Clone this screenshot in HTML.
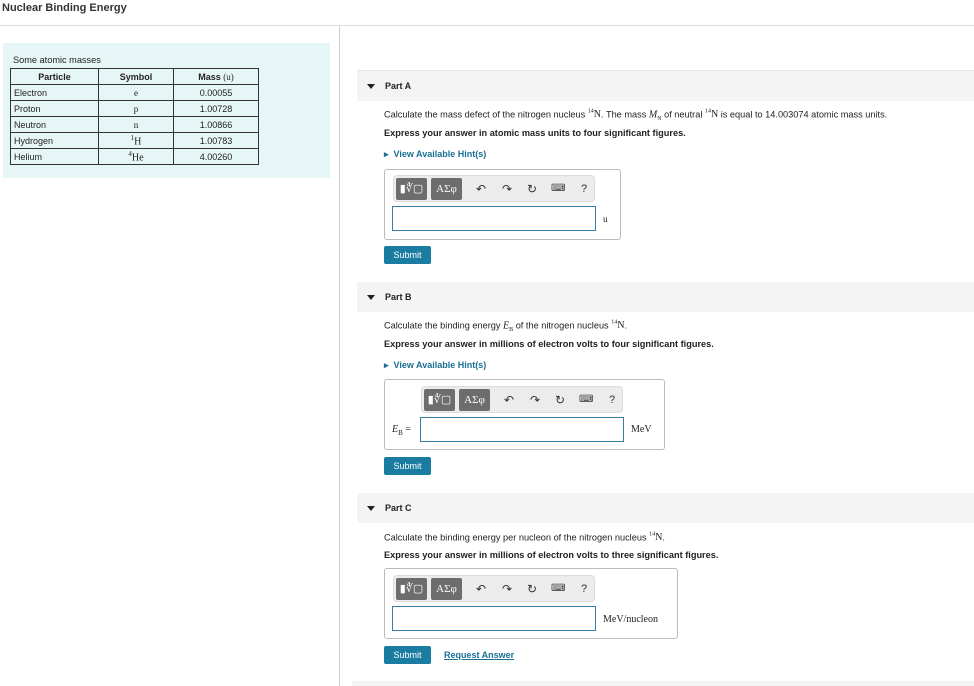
<!DOCTYPE html>
<html><head><meta charset="utf-8"><style>
*{margin:0;padding:0;box-sizing:border-box}
body{width:974px;height:686px;position:relative;background:#fff;font-family:"Liberation Sans",Arial,sans-serif;color:#222;overflow:hidden}
.a{position:absolute}
.t{font-size:9.2px;white-space:nowrap}
.ser{font-family:"Liberation Serif",serif}
table{border-collapse:collapse;font-size:9px}
td,th{border:1px solid #333;height:16px;padding:0 3px}
th{font-weight:bold;text-align:center}
.ph{background:#f4f4f4;left:357px;width:617px;height:30px}
.ph span{position:absolute;left:28px;top:10px;font-size:9px;font-weight:bold}
.ph i{position:absolute;left:10px;top:13px;border-left:4px solid transparent;border-right:4px solid transparent;border-top:5px solid #222}
.box{border:1px solid #bbb;border-radius:3px;background:#fff}
.tb{background:#ececec;border:1px solid #ddd;border-radius:4px;height:27px;width:202px}
.btn{position:absolute;top:2px;height:22px;width:31px;background:#6d6d6d;border-radius:2px;color:#fff;font-family:"Liberation Serif",serif;font-size:11px;text-align:center;line-height:22px}
.ic{position:absolute;top:6px;font-size:12px;color:#333;line-height:14px}
.inp{border:1px solid #3a7ca5;height:25px;width:204px;background:#fff}
.sub{background:#1a7ca0;color:#fff;font-size:9px;width:47px;height:18px;text-align:center;line-height:18px;border-radius:2px}
.hint{color:#1a6f94;font-weight:bold;font-size:9px}
</style></head><body>
<div class="a" style="left:2px;top:2px;font-size:11px;font-weight:bold;color:#333">Nuclear Binding Energy</div>
<div class="a" style="left:0;top:25px;width:974px;height:1px;background:#ddd"></div>
<div class="a" style="left:339px;top:26px;width:1px;height:660px;background:#ccc"></div>
<div class="a" style="left:3px;top:43px;width:327px;height:135px;background:#e6f5f5"></div>
<div class="a t" style="left:13px;top:55px">Some atomic masses</div>
<table class="a" style="left:10px;top:68px;width:249px">
<tr><th style="width:88px">Particle</th><th style="width:75px">Symbol</th><th>Mass <span class="ser" style="font-weight:normal">(u)</span></th></tr>
<tr><td>Electron</td><td class="ser" style="text-align:center">e</td><td style="text-align:center">0.00055</td></tr>
<tr><td>Proton</td><td class="ser" style="text-align:center">p</td><td style="text-align:center">1.00728</td></tr>
<tr><td>Neutron</td><td class="ser" style="text-align:center">n</td><td style="text-align:center">1.00866</td></tr>
<tr><td>Hydrogen</td><td class="ser" style="text-align:center;font-size:10px"><sup style="font-size:7px">1</sup>H</td><td style="text-align:center">1.00783</td></tr>
<tr><td>Helium</td><td class="ser" style="text-align:center;font-size:10px"><sup style="font-size:7px">4</sup>He</td><td style="text-align:center">4.00260</td></tr>
</table>

<div class="a" style="left:357px;top:70px;width:617px;height:1px;background:#e6e6e6"></div>
<div class="a ph" style="top:71px"><i></i><span>Part A</span></div>
<div class="a t" style="left:384px;top:109px">Calculate the mass defect of the nitrogen nucleus <span class="ser" style="font-size:10px"><sup style="font-size:6px">14</sup>N</span>. The mass <i class="ser" style="font-size:10px">M</i><sub class="ser" style="font-size:6px">N</sub> of neutral <span class="ser" style="font-size:10px"><sup style="font-size:6px">14</sup>N</span> is equal to 14.003074 atomic mass units.</div>
<div class="a t" style="left:384px;top:128px;font-weight:bold">Express your answer in atomic mass units to four significant figures.</div>
<div class="a hint" style="left:384px;top:149px">▸ &nbsp;View Available Hint(s)</div>
<div class="a box" style="left:384px;top:169px;width:237px;height:71px"></div>
<div class="a tb" style="left:393px;top:175px"><div class="btn" style="left:2px">▮∜▢</div><div class="btn" style="left:37px">ΑΣφ</div><div class="ic" style="left:82px">↶</div><div class="ic" style="left:108px">↷</div><div class="ic" style="left:133px">↻</div><div class="ic" style="left:157px;font-size:10px">⌨</div><div class="ic" style="left:187px;font-size:11px">?</div></div>
<div class="a inp" style="left:392px;top:206px"></div>
<div class="a t ser" style="left:603px;top:214px">u</div>
<div class="a sub" style="left:384px;top:246px">Submit</div>

<div class="a ph" style="top:282px"><i></i><span>Part B</span></div>
<div class="a t" style="left:384px;top:320px">Calculate the binding energy <i class="ser" style="font-size:10px">E</i><sub class="ser" style="font-size:6px">B</sub> of the nitrogen nucleus <span class="ser" style="font-size:10px"><sup style="font-size:6px">14</sup>N</span>.</div>
<div class="a t" style="left:384px;top:339px;font-weight:bold">Express your answer in millions of electron volts to four significant figures.</div>
<div class="a hint" style="left:384px;top:360px">▸ &nbsp;View Available Hint(s)</div>
<div class="a box" style="left:384px;top:379px;width:281px;height:71px"></div>
<div class="a tb" style="left:421px;top:386px"><div class="btn" style="left:2px">▮∜▢</div><div class="btn" style="left:37px">ΑΣφ</div><div class="ic" style="left:82px">↶</div><div class="ic" style="left:108px">↷</div><div class="ic" style="left:133px">↻</div><div class="ic" style="left:157px;font-size:10px">⌨</div><div class="ic" style="left:187px;font-size:11px">?</div></div>
<div class="a t ser" style="left:392px;top:424px;font-size:10px"><i>E</i><sub style="font-size:7px">B</sub> =</div>
<div class="a inp" style="left:420px;top:417px"></div>
<div class="a t ser" style="left:631px;top:424px;font-size:10px">MeV</div>
<div class="a sub" style="left:384px;top:457px">Submit</div>

<div class="a ph" style="top:493px"><i></i><span>Part C</span></div>
<div class="a t" style="left:384px;top:532px">Calculate the binding energy per nucleon of the nitrogen nucleus <span class="ser" style="font-size:10px"><sup style="font-size:6px">14</sup>N</span>.</div>
<div class="a t" style="left:384px;top:550px;font-weight:bold">Express your answer in millions of electron volts to three significant figures.</div>
<div class="a box" style="left:384px;top:568px;width:294px;height:71px"></div>
<div class="a tb" style="left:393px;top:575px"><div class="btn" style="left:2px">▮∜▢</div><div class="btn" style="left:37px">ΑΣφ</div><div class="ic" style="left:82px">↶</div><div class="ic" style="left:108px">↷</div><div class="ic" style="left:133px">↻</div><div class="ic" style="left:157px;font-size:10px">⌨</div><div class="ic" style="left:187px;font-size:11px">?</div></div>
<div class="a inp" style="left:392px;top:606px"></div>
<div class="a t ser" style="left:603px;top:614px;font-size:10px">MeV/nucleon</div>
<div class="a sub" style="left:384px;top:646px">Submit</div>
<div class="a hint" style="left:444px;top:650px;text-decoration:underline">Request Answer</div>
<div class="a" style="left:352px;top:681px;width:622px;height:5px;background:#f4f4f4"></div>
</body></html>
